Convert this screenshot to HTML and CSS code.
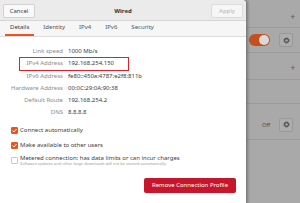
FILE: index.html
```html
<!DOCTYPE html>
<html>
<head>
<meta charset="utf-8">
<link rel="stylesheet" href="styles.css">
</head>
<body>
<div class="screen">
  <div class="dialog">
    <div class="header">
      <button class="btn cancel">Cancel</button>
      <div class="title">Wired</div>
      <button class="btn apply">Apply</button>
    </div>
    <div class="tabs">
      <span class="tab active">Details</span>
      <span class="tab">Identity</span>
      <span class="tab">IPv4</span>
      <span class="tab">IPv6</span>
      <span class="tab">Security</span>
    </div>
    <div class="content">
      <div class="info">
        <div class="row"><span class="label">Link speed</span><span class="value">1000 Mb/s</span></div>
        <div class="row marked"><span class="label">IPv4 Address</span><span class="value">192.168.254.150</span></div>
        <div class="row"><span class="label">IPv6 Address</span><span class="value">fe80::450a:4787:e2f8:811b</span></div>
        <div class="row"><span class="label">Hardware Address</span><span class="value">00:0C:29:0A:90:38</span></div>
        <div class="row"><span class="label">Default Route</span><span class="value">192.168.254.2</span></div>
        <div class="row"><span class="label">DNS</span><span class="value">8.8.8.8</span></div>
      </div>
      <div class="checks">
        <div class="check"><span class="box on"><svg viewBox="0 0 7 7"><path d="M1.6 3.6 L3 5 L5.5 2" fill="none" stroke="#fff" stroke-width="1"/></svg></span><span>Connect automatically</span></div>
        <div class="check"><span class="box on"><svg viewBox="0 0 7 7"><path d="M1.6 3.6 L3 5 L5.5 2" fill="none" stroke="#fff" stroke-width="1"/></svg></span><span>Make available to other users</span></div>
        <div class="check metered"><span class="box"></span>
          <div class="mtext">
            <div class="main">Metered connection: has data limits or can incur charges</div>
            <div class="sub">Software updates and other large downloads will not be started automatically.</div>
          </div>
        </div>
      </div>
      <div class="actions"><button class="remove">Remove Connection Profile</button></div>
    </div>
  </div>
  <div class="side">
    <div class="srow r1"><span class="plus">+</span></div>
    <div class="srow r2">
      <span class="toggle"><span class="knob"></span></span>
      <span class="gbtn"><svg viewBox="0 0 8 8"><circle cx="4" cy="4" r="2.2" fill="none" stroke="#4a4a4a" stroke-width="1.3"/><circle cx="4" cy="4" r="3" fill="none" stroke="#4a4a4a" stroke-width="1" stroke-dasharray="1.2 1.16"/></svg></span>
    </div>
    <div class="srow r3"><span class="plus">+</span></div>
    <div class="srow r4"></div>
    <div class="srow r5">
      <span class="off">Off</span>
      <span class="gbtn"><svg viewBox="0 0 8 8"><circle cx="4" cy="4" r="2.2" fill="none" stroke="#4a4a4a" stroke-width="1.3"/><circle cx="4" cy="4" r="3" fill="none" stroke="#4a4a4a" stroke-width="1" stroke-dasharray="1.2 1.16"/></svg></span>
    </div>
    <div class="sfill"></div>
  </div>
</div>
</body>
</html>
```
FILE: styles.css
```css
* { box-sizing: border-box; }
html, body { margin: 0; padding: 0; }
html { background: #a9a9a9; }
body {
  font-family: "Noto Sans", "Open Sans", sans-serif;
  font-size: 6px;
  color: #3d3d3d;
  background: #a9a9a9;
}
.screen {
  width: 300px;
  height: 203px;
  display: flex;
  overflow: hidden;
  background: #a9a9a9;
}
.dialog {
  width: 246px;
  flex: none;
  background: #fff;
  border-top-right-radius: 4px;
  box-shadow: 1px 0 3px 1px rgba(0,0,0,0.28);
  display: flex;
  flex-direction: column;
  position: relative;
  z-index: 1;
}
.header {
  height: 21px;
  background: #ebebeb;
  border-bottom: 1px solid #d6d6d6;
  border-top-right-radius: 4px;
  display: flex;
  align-items: flex-start;
  justify-content: space-between;
  padding: 4px 3px 0 3px;
}
.btn {
  font-family: inherit;
  font-size: 6px;
  height: 14px;
  width: 32px;
  padding: 0;
  border: 1px solid #d2d2d2;
  border-radius: 2px;
  background: #f9f9f9;
  color: #3d3d3d;
  line-height: 12px;
}
.apply { color: #b4b4b4; background: #f6f6f6; border-color: #dcdcdc; }
.title {
  font-weight: bold;
  line-height: 14px;
  color: #333;
}
.tabs {
  height: 16px;
  background: #f6f6f6;
  border-bottom: 1px solid #dcdcdc;
  display: flex;
  gap: 4px;
  padding-left: 5px;
}
.tab {
  padding: 0 5px;
  line-height: 13px;
  color: #555;
  border-bottom: 2px solid transparent;
}
.tab.active { border-bottom-color: #e95420; color: #3d3d3d; }
.content {
  flex: 1;
  display: flex;
  flex-direction: column;
  padding: 8px 10px 0 0;
}
.row {
  display: flex;
  gap: 5px;
  height: 12.25px;
  line-height: 12.25px;
  position: relative;
}
.label {
  width: 63px;
  text-align: right;
  color: #8c8c8c;
  flex: none;
}
.value { color: #3d3d3d; white-space: nowrap; }
.marked::after {
  content: "";
  position: absolute;
  left: 19px;
  top: -0.5px;
  width: 108px;
  height: 12.5px;
  border: 1.5px solid #e0202e;
}
.checks {
  margin-top: 4px;
  padding-left: 11px;
}
.check {
  display: flex;
  align-items: center;
  gap: 2px;
  height: 15px;
}
.box {
  width: 7px;
  height: 7px;
  flex: none;
  border-radius: 1px;
  border: 1px solid #c9c9c9;
  background: #fff;
  display: flex;
}
.box.on { background: #e95420; border-color: #e95420; }
.box svg { width: 7px; height: 7px; margin: -1px; }
.metered { align-items: center; height: 15px; }
.mtext { display: flex; flex-direction: column; }
.main { line-height: 6px; white-space: nowrap; }
.sub { font-size: 4px; line-height: 5px; color: #9a9a9a; white-space: nowrap; }
.actions {
  display: flex;
  justify-content: flex-end;
  margin-top: 10px;
}
.remove {
  font-family: inherit;
  font-size: 6px;
  width: 92px;
  height: 15px;
  padding: 0;
  border: none;
  border-radius: 2px;
  background: #c7162b;
  color: #fff;
}
.side {
  flex: 1 1 auto;
  display: flex;
  flex-direction: column;
  background: #a9a9a9;
}
.srow {
  flex: none;
  border-bottom: 1px solid #9b9b9b;
  display: flex;
  align-items: center;
  justify-content: flex-end;
  padding-right: 7px;
}
.sfill { flex: 1; }
.r1 { height: 28px; align-items: flex-start; padding-top: 12px; padding-right: 5px; }
.r2 { height: 25px; justify-content: space-between; padding-left: 3px; }
.r3 { height: 27px; padding-right: 5px; padding-top: 3px; }
.r4 { height: 24px; }
.r5 { height: 36px; gap: 9px; padding-top: 6px; }
.plus { color: #555; font-size: 8px; line-height: 9px; }
.toggle {
  width: 21px;
  height: 12px;
  border-radius: 6px;
  background: #c4501e;
  display: flex;
  justify-content: flex-end;
  align-items: center;
  padding: 1px;
}
.knob { width: 10px; height: 10px; border-radius: 50%; background: #dadada; }
.gbtn {
  width: 14px;
  height: 14px;
  border: 1px solid #999;
  border-radius: 2px;
  background: #adadad;
  display: flex;
  align-items: center;
  justify-content: center;
}
.gbtn svg { width: 7px; height: 7px; }
.off { color: #4a4a4a; font-size: 5.5px; }
```
